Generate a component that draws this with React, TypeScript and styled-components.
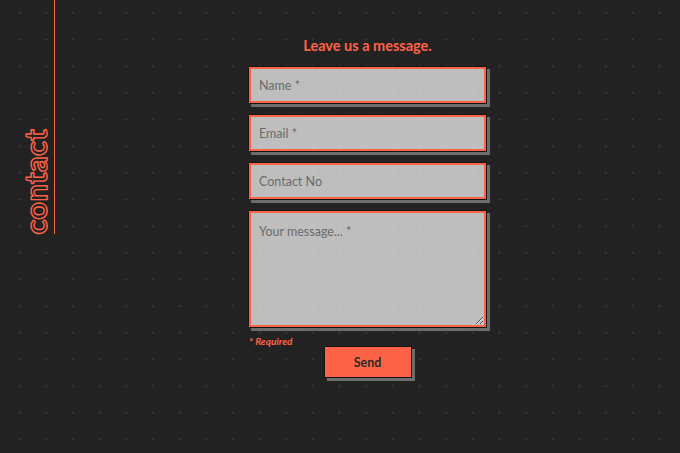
import React from "react";
import styled, { createGlobalStyle } from "styled-components";

const ORANGE = "#ff6347";

const Global = createGlobalStyle`
  html, body {
    margin: 0;
    padding: 0;
    background: #222222;
  }
  body {
    font-family: "Lato", "Liberation Sans", sans-serif;
  }
  * { box-sizing: border-box; }
`;

const Page = styled.div`
  width: 680px;
  height: 453px;
  display: flex;
  background-color: #222222;
  background-image: radial-gradient(circle, #3c3c3c 0.9px, transparent 1.3px);
  background-size: 26.67px 26.67px;
  background-position: 6.33px -0.63px;
  overflow: hidden;
`;

const Sidebar = styled.aside`
  width: 55px;
  height: 234px;
  flex-shrink: 0;
  border-right: 1.5px solid ${ORANGE};
  display: flex;
  align-items: flex-end;
  justify-content: flex-end;
  padding-right: 7px;
`;

const SideTitle = styled.h1`
  margin: 0 0 -1px 0;
  writing-mode: vertical-rl;
  transform: rotate(180deg);
  font-family: "Lato", "Liberation Sans", sans-serif;
  font-size: 31px;
  font-weight: 700;
  line-height: 24px;
  letter-spacing: 0.3px;
  color: transparent;
  -webkit-text-stroke: 1.4px ${ORANGE};
`;

const Main = styled.main`
  flex: 1;
  display: flex;
  flex-direction: column;
  align-items: center;
  padding-top: 37px;
`;

const Heading = styled.h2`
  margin: 0 0 12px 0;
  font-size: 14.5px;
  font-weight: 700;
  color: ${ORANGE};
  line-height: 18px;
`;

const Form = styled.form`
  width: 237px;
  display: flex;
  flex-direction: column;
  gap: 12px;
`;

const fieldStyles = `
  width: 100%;
  border: 2px solid ${ORANGE};
  background: rgba(255, 255, 255, 0.71);
  box-shadow: 0 0 0 1px #141414, 3px 3px 0 1px #6c6c6c;
  font-family: "Lato", "Liberation Sans", sans-serif;
  font-size: 12.5px;
  color: #333;
  padding: 0 8px;
  outline: none;
  &::placeholder { color: #6a6a6a; opacity: 1; }
`;

const Input = styled.input`
  ${fieldStyles}
  height: 36px;
`;

const TextArea = styled.textarea`
  ${fieldStyles}
  height: 116px;
  padding-top: 11px;
  resize: vertical;
  display: block;
`;

const Required = styled.span`
  margin-top: -4px;
  font-size: 10px;
  font-style: italic;
  font-weight: 700;
  color: ${ORANGE};
  line-height: 12px;
`;

const ButtonRow = styled.div`
  display: flex;
  justify-content: center;
  margin-top: -12px;
`;

const Button = styled.button`
  width: 86px;
  height: 30px;
  border: none;
  background: ${ORANGE};
  box-shadow: 0 0 0 1px #141414, 3px 3px 0 1px #6c6c6c;
  font-family: "Lato", "Liberation Sans", sans-serif;
  font-size: 12.5px;
  font-weight: 700;
  color: #2a2a2a;
  cursor: pointer;
`;

export default function App() {
  return (
    <>
      <Global />
      <Page>
        <Sidebar>
          <SideTitle>contact</SideTitle>
        </Sidebar>
        <Main>
          <Heading>Leave us a message.</Heading>
          <Form onSubmit={(e) => e.preventDefault()}>
            <Input placeholder="Name *" />
            <Input placeholder="Email *" />
            <Input placeholder="Contact No" />
            <TextArea placeholder="Your message... *" />
            <Required>* Required</Required>
            <ButtonRow>
              <Button type="submit">Send</Button>
            </ButtonRow>
          </Form>
        </Main>
      </Page>
    </>
  );
}
